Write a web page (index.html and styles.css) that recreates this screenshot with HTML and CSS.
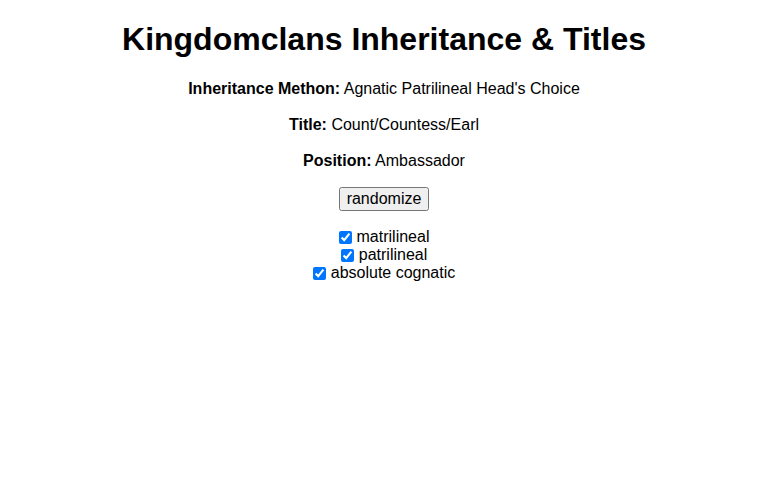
FILE: index.html
```html
<!DOCTYPE html>
<html lang="en">
<head>
    <meta charset="UTF-8">
    <meta name="viewport" content="width=device-width, initial-scale=1.0">
    <title>Kingdomclans Inheritance &amp; Titles</title>
    <link rel="stylesheet" href="styles.css">
</head>
<body>
    <div class="main">
        <h1>Kingdomclans Inheritance &amp; Titles</h1>
        <p><b>Inheritance Methon:</b> <span id="method">Agnatic Patrilineal Head's Choice</span></p>
        <p><b>Title:</b> <span id="title">Count/Countess/Earl</span></p>
        <p><b>Position:</b> <span id="position">Ambassador</span></p>
        <button id="randomize">randomize</button>
        <div class="opts">
            <label><input type="checkbox" id="matri" checked>matrilineal</label>
            <label><input type="checkbox" id="patri" checked>patrilineal</label>
            <label><input type="checkbox" id="cognatic" checked>absolute cognatic</label>
        </div>
    </div>
</body>
</html>
```

FILE: styles.css
```css
body {
    font-family: "Liberation Sans", Arial, sans-serif;
    margin: 0;
}
.main {
    text-align: center;
}
.main h1 {
    font-size: 32px;
    margin-bottom: 21px;
}
.main p {
    line-height: 20px;
}
.main button {
    font-family: "Liberation Sans", Arial, sans-serif;
    font-size: 16px;
}
.opts {
    margin-top: 17px;
}
.opts label {
    display: flex;
    justify-content: center;
    align-items: center;
    height: 18px;
}
.opts input {
    margin: 0 5px 0 0;
}
```
